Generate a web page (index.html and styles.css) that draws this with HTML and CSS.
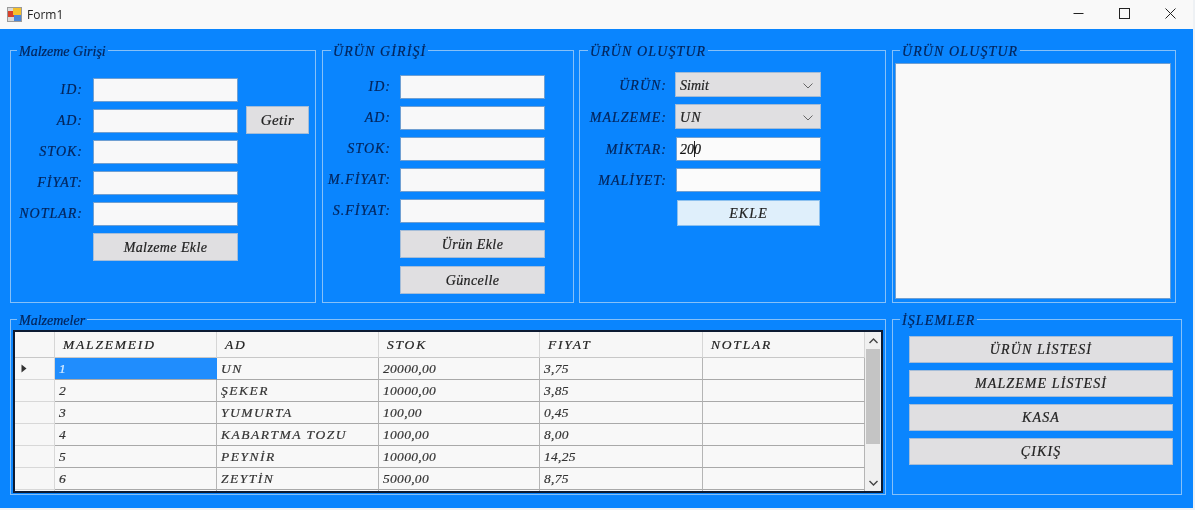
FILE: index.html
```html
<!DOCTYPE html>
<html lang="tr">
<head>
<meta charset="utf-8">
<title>Form1</title>
<link rel="stylesheet" href="styles.css">
</head>
<body>
<div class="window">
  <header class="titlebar">
    <svg class="app-icon" width="15" height="15" viewBox="0 0 15 15"><rect x="0.5" y="0.5" width="14" height="14" fill="#d9d9d9" stroke="#9a9a9a"/><rect x="1" y="4" width="6" height="6" fill="#d8402a"/><rect x="6" y="1" width="8" height="7" fill="#f5c02c"/><rect x="7" y="8" width="7" height="6" fill="#4a86d8"/></svg>
    <span class="title">Form1</span>
    <div class="controls">
      <svg width="11" height="11" viewBox="0 0 11 11"><path d="M0.5 5.5h10" stroke="#222" stroke-width="1" fill="none"/></svg>
      <svg width="11" height="11" viewBox="0 0 11 11"><rect x="0.5" y="0.5" width="10" height="10" stroke="#222" stroke-width="1" fill="none"/></svg>
      <svg width="11" height="11" viewBox="0 0 11 11"><path d="M0.5 0.5l10 10M10.5 0.5l-10 10" stroke="#222" stroke-width="1" fill="none"/></svg>
    </div>
  </header>
  <main class="client">
    <div class="row top">
      <fieldset class="group g1">
        <legend>Malzeme Girişi</legend>
        <div class="form form1">
          <label>ID:</label><div class="input"></div><div></div>
          <label>AD:</label><div class="input"></div><button class="btn getir">Getir</button>
          <label>STOK:</label><div class="input"></div><div></div>
          <label>FİYAT:</label><div class="input"></div><div></div>
          <label>NOTLAR:</label><div class="input"></div><div></div>
          <div></div><button class="btn tall">Malzeme Ekle</button>
        </div>
      </fieldset>
      <fieldset class="group g2">
        <legend class="caps">ÜRÜN GİRİŞİ</legend>
        <div class="form form2">
          <label>ID:</label><div class="input"></div>
          <label>AD:</label><div class="input"></div>
          <label>STOK:</label><div class="input"></div>
          <label>M.FİYAT:</label><div class="input"></div>
          <label>S.FİYAT:</label><div class="input"></div>
          <div></div><button class="btn tall">Ürün Ekle</button>
          <div></div><button class="btn tall push">Güncelle</button>
        </div>
      </fieldset>
      <fieldset class="group g3">
        <legend class="caps">ÜRÜN OLUŞTUR</legend>
        <div class="form form3">
          <label>ÜRÜN:</label>
          <div class="combo"><span>Simit</span><svg width="10" height="6" viewBox="0 0 10 6"><path d="M0.5 0.5l4.5 4.5 4.5-4.5" stroke="#666" fill="none"/></svg></div>
          <label>MALZEME:</label>
          <div class="combo second"><span class="caps">UN</span><svg width="10" height="6" viewBox="0 0 10 6"><path d="M0.5 0.5l4.5 4.5 4.5-4.5" stroke="#666" fill="none"/></svg></div>
          <label>MİKTAR:</label><div class="input white"><span>20<i class="caret"></i>0</span></div>
          <label>MALİYET:</label><div class="input white"></div>
          <div></div><button class="btn ekle caps">EKLE</button>
        </div>
      </fieldset>
      <fieldset class="group g4">
        <legend class="caps">ÜRÜN OLUŞTUR</legend>
        <div class="listbox"></div>
      </fieldset>
    </div>
    <div class="row bottom">
      <fieldset class="group g5">
        <legend>Malzemeler</legend>
        <div class="grid-view">
          <div class="grid-clip">
            <table>
              <colgroup><col class="c0"><col class="c1"><col class="c2"><col class="c3"><col class="c4"><col class="c5"></colgroup>
              <thead><tr><th></th><th>MALZEMEID</th><th>AD</th><th>STOK</th><th>FIYAT</th><th>NOTLAR</th></tr></thead>
              <tbody>
                <tr><td class="rh"><svg width="6" height="9" viewBox="0 0 6 9"><path d="M0.5 0.5v8l5-4z" fill="#333"/></svg></td><td class="sel">1</td><td class="caps">UN</td><td>20000,00</td><td>3,75</td><td></td></tr>
                <tr><td class="rh"></td><td>2</td><td class="caps">ŞEKER</td><td>10000,00</td><td>3,85</td><td></td></tr>
                <tr><td class="rh"></td><td>3</td><td class="caps">YUMURTA</td><td>100,00</td><td>0,45</td><td></td></tr>
                <tr><td class="rh"></td><td>4</td><td class="caps">KABARTMA TOZU</td><td>1000,00</td><td>8,00</td><td></td></tr>
                <tr><td class="rh"></td><td>5</td><td class="caps">PEYNİR</td><td>10000,00</td><td>14,25</td><td></td></tr>
                <tr><td class="rh"></td><td>6</td><td class="caps">ZEYTİN</td><td>5000,00</td><td>8,75</td><td></td></tr>
                <tr><td class="rh"></td><td></td><td></td><td></td><td></td><td></td></tr>
              </tbody>
            </table>
          </div>
          <div class="scrollbar">
            <div class="arrow"><svg width="9" height="6" viewBox="0 0 9 6"><path d="M0.5 5l4-4 4 4" stroke="#444" stroke-width="1.4" fill="none"/></svg></div>
            <div class="thumb"></div>
            <div class="arrow"><svg width="9" height="6" viewBox="0 0 9 6"><path d="M0.5 1l4 4 4-4" stroke="#444" stroke-width="1.4" fill="none"/></svg></div>
          </div>
        </div>
      </fieldset>
      <fieldset class="group g6">
        <legend class="caps">İŞLEMLER</legend>
        <div class="actions">
          <button class="btn action caps">ÜRÜN LİSTESİ</button>
          <button class="btn action caps">MALZEME LİSTESİ</button>
          <button class="btn action caps">KASA</button>
          <button class="btn action caps">ÇIKIŞ</button>
        </div>
      </fieldset>
    </div>
  </main>
</div>
</body>
</html>
```
FILE: styles.css
```css
* { box-sizing: border-box; }
html, body { margin: 0; padding: 0; height: 100%; overflow: hidden; background: #eef1f4; }
body { font-family: "Liberation Serif", serif; font-style: italic; font-size: 14px; -webkit-text-stroke: 0.2px currentColor; }

.window { width: 1193px; height: 508px; display: flex; flex-direction: column; filter: blur(0.45px); }

.titlebar { height: 29px; background: #f9f9f9; display: flex; align-items: center; padding-left: 7px; flex: none; }
.app-icon { margin-right: 5px; }
.title { font-family: "Open Sans", sans-serif; font-style: normal; font-size: 12px; color: #222; -webkit-text-stroke: 0; }
.controls { margin-left: auto; display: flex; gap: 35px; padding-right: 17px; padding-bottom: 3px; }

.client { flex: 1; background: #0a85fe; padding: 13px 0 0 10px; }
.row { display: flex; }
.top { height: 261px; }
.bottom { height: 184px; margin-top: 8px; }

.group { margin: 0; padding: 0; border: 1px solid #86c0f8; min-width: 0; }
.group legend { height: 16px; line-height: 19px; margin-left: 6px; padding: 0 2px; color: #04245a; font-size: 14px; white-space: nowrap; }
.group legend.caps { letter-spacing: 1.1px; }
.g1 { width: 306px; margin-right: 6px; padding: 20px 0 0 5px; }
.g1 legend { margin-left: 1px; }
.g2 { width: 252px; margin-right: 5px; padding: 17px 0 0 2px; }
.g3 { width: 307px; margin-right: 6px; padding: 14px 0 0 2px; }
.g4 { width: 284px; padding: 5px 0 0 2px; }
.g4 legend { margin-left: 5px; }
.g5 { width: 876px; margin-right: 6px; padding: 3px 0 0 2px; }
.g5 legend { margin-left: 4px; }
.g6 { width: 290px; padding: 9px 0 0 16px; }
.g6 legend { margin-left: -9px; }

.form { display: grid; column-gap: 8px; row-gap: 7px; grid-auto-rows: min-content; align-items: center; }
.form1 { grid-template-columns: 69px 145px 63px; }
.form2 { grid-template-columns: 67px 145px; }
.form3 { grid-template-columns: 86px 145px; }
.form label { text-align: right; padding-right: 1px; color: #04245a; white-space: nowrap; letter-spacing: 1px; }
.form1 label { padding-right: 2px; }
.form3 label { padding-top: 2px; }

.input { height: 24px; background: #f8f8f9; border: 1px solid #6f9fd2; display: flex; align-items: center; padding-left: 3px; color: #111; }
.input.white { background: #fbfbfb; }
.caret { display: inline-block; width: 1px; height: 16px; background: #222; vertical-align: -3px; margin: 0 -1px 0 0; }

.btn { font: inherit; font-style: italic; color: #222; background: #e0dfe1; border: 1px solid #a5bdd8; padding: 0; letter-spacing: 0.4px; }
.btn.caps { letter-spacing: 1.1px; }
.tall { height: 28px; padding-top: 2px; }
.push { margin-top: 1px; }
.getir { height: 28px; margin: -3px 0 -1px; padding-top: 1px; font-size: 15px; }
.ekle { height: 26px; margin: 1px 1px 0; width: 143px; padding-top: 1px; background: #dfeffb; border-color: #8cc0ee; }

.combo { height: 25px; width: 146px; margin-left: -1px; background: #e0dfe1; border: 1px solid #a3bbd6; display: flex; align-items: center; justify-content: space-between; padding: 2px 3px 0 4px; color: #222; }
.combo.second { margin-bottom: 1px; }
.combo .caps { letter-spacing: 1.1px; }
.combo svg { margin-right: 4px; }

.listbox { width: 276px; height: 236px; background: #f9f9f9; border: 1px solid #6f9fd2; }

.grid-view { width: 870px; height: 163px; border: 2px solid #0d1b33; display: flex; background: #f8f8f8; }
.grid-clip { width: 850px; overflow: hidden; }
table { border-collapse: separate; border-spacing: 0; table-layout: fixed; width: 850px; color: #333; font-size: 13.5px; }
.c0 { width: 40px; } .c1 { width: 162px; } .c2 { width: 162px; } .c3 { width: 161px; } .c4 { width: 163px; } .c5 { width: 162px; }
th { height: 26px; padding: 0 0 0 8px; text-align: left; font-weight: normal; color: #222; letter-spacing: 1.8px; background: #f7f7f7; border-right: 1px solid #d6d6d6; border-bottom: 1px solid #c8c8c8; white-space: nowrap; }
td { height: 22px; padding: 0 0 0 4px; border-right: 1px solid #b5b5b5; border-bottom: 1px solid #a9a9a9; white-space: nowrap; letter-spacing: 0.3px; }
td.caps { letter-spacing: 1.5px; }
.rh { padding-left: 6px; border-color: #d8d8d8; background: #f7f7f7; }
.rh svg { display: block; }
.sel { background: #208dfd; color: #d8ecff; border-right-color: #208dfd; }

.scrollbar { flex: 1; background: #f0f0f0; display: flex; flex-direction: column; }
.arrow { height: 17px; display: flex; align-items: center; justify-content: center; }
.arrow:last-child { margin-top: auto; }
.thumb { height: 95px; background: #c4c4c4; margin: 0 1px; }

.actions { display: flex; flex-direction: column; gap: 7px; width: 264px; }
.action { height: 27px; }
```
